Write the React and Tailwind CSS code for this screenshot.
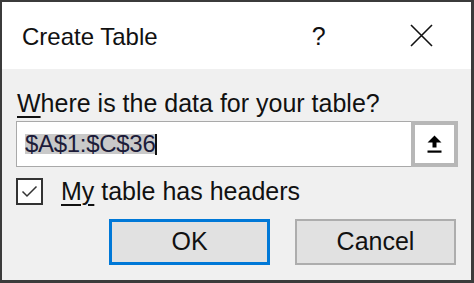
import React from "react";

export default function App() {
  const font = { fontFamily: '"Liberation Sans", Arial, sans-serif' };
  return (
    <div className="w-[474px] h-[283px] bg-[#3b3b3b] pt-[2px] pl-[2px] pr-[3px] pb-[3px] overflow-hidden" style={font}>
      <div className="w-full h-full flex flex-col">
        {/* Title bar */}
        <div className="h-[67px] bg-white flex items-center pl-[20px] text-[#111]">
          <div className="text-[24px] leading-none mt-[2px]">Create Table</div>
          <div className="ml-[154px] text-[25px] leading-none mt-[2px]">?</div>
          <svg className="ml-[84px]" width="23" height="23" viewBox="0 0 23 23">
            <path d="M1 1 L22 22 M22 1 L1 22" stroke="#111" strokeWidth="1.6" fill="none" />
          </svg>
        </div>
        {/* Body */}
        <div className="flex-1 bg-[#f0f0f0] flex flex-col pl-[14px] pr-[13px]">
          <div className="mt-[19px] text-[25px] leading-[30px] text-[#111] pl-[1px]">
            <span className="underline underline-offset-[4px] decoration-[2px]">W</span>here is the data for your table?
          </div>
          <div className="mt-[3px] h-[46px] w-[442px] border border-[#a9a9a9] bg-white flex">
            <div className="flex-1 flex items-center pl-[8px]">
              <span className="bg-[#c9c9c9] text-[#1c1c3a] text-[24px] leading-[20px] h-[20px] tracking-[-0.3px]">$A$1:$C$36</span>
              <span className="w-[2px] h-[21px] bg-[#111]"></span>
            </div>
            <div className="w-[47px] border-[4px] border-[#b7b7b7] bg-white flex items-center justify-center -mr-px -my-px" style={{ height: 46 }}>
              <svg width="15" height="18" viewBox="0 0 15 18">
                <path d="M7.5 0.5 L14.5 7.5 L9.5 7.5 L9.5 12.5 L5.5 12.5 L5.5 7.5 L0.5 7.5 Z" fill="#000" />
                <rect x="0.5" y="15.5" width="14" height="2.2" fill="#000" />
              </svg>
            </div>
          </div>
          <div className="mt-[10px] flex items-center h-[28px]">
            <div className="w-[27px] h-[27px] border-2 border-[#333] bg-white flex items-center justify-center">
              <svg width="17" height="13" viewBox="0 0 17 13">
                <path d="M1.5 6.5 L6 11 L15.5 1.5" stroke="#333" strokeWidth="1.5" fill="none" />
              </svg>
            </div>
            <div className="ml-[18px] text-[25px] leading-[28px] text-[#111]">
              <span className="underline underline-offset-[4px] decoration-[2px]">My</span> table has headers
            </div>
          </div>
          <div className="mt-[14px] flex justify-end gap-[25px] pr-[2px]">
            <div className="w-[161px] h-[46px] border-[3px] border-[#0078d7] bg-[#e1e1e1] flex items-center justify-center text-[25px] text-[#111]">
              OK
            </div>
            <div className="w-[161px] h-[46px] border-2 border-[#adadad] bg-[#e1e1e1] flex items-center justify-center text-[25px] text-[#111]">
              Cancel
            </div>
          </div>
        </div>
      </div>
    </div>
  );
}
